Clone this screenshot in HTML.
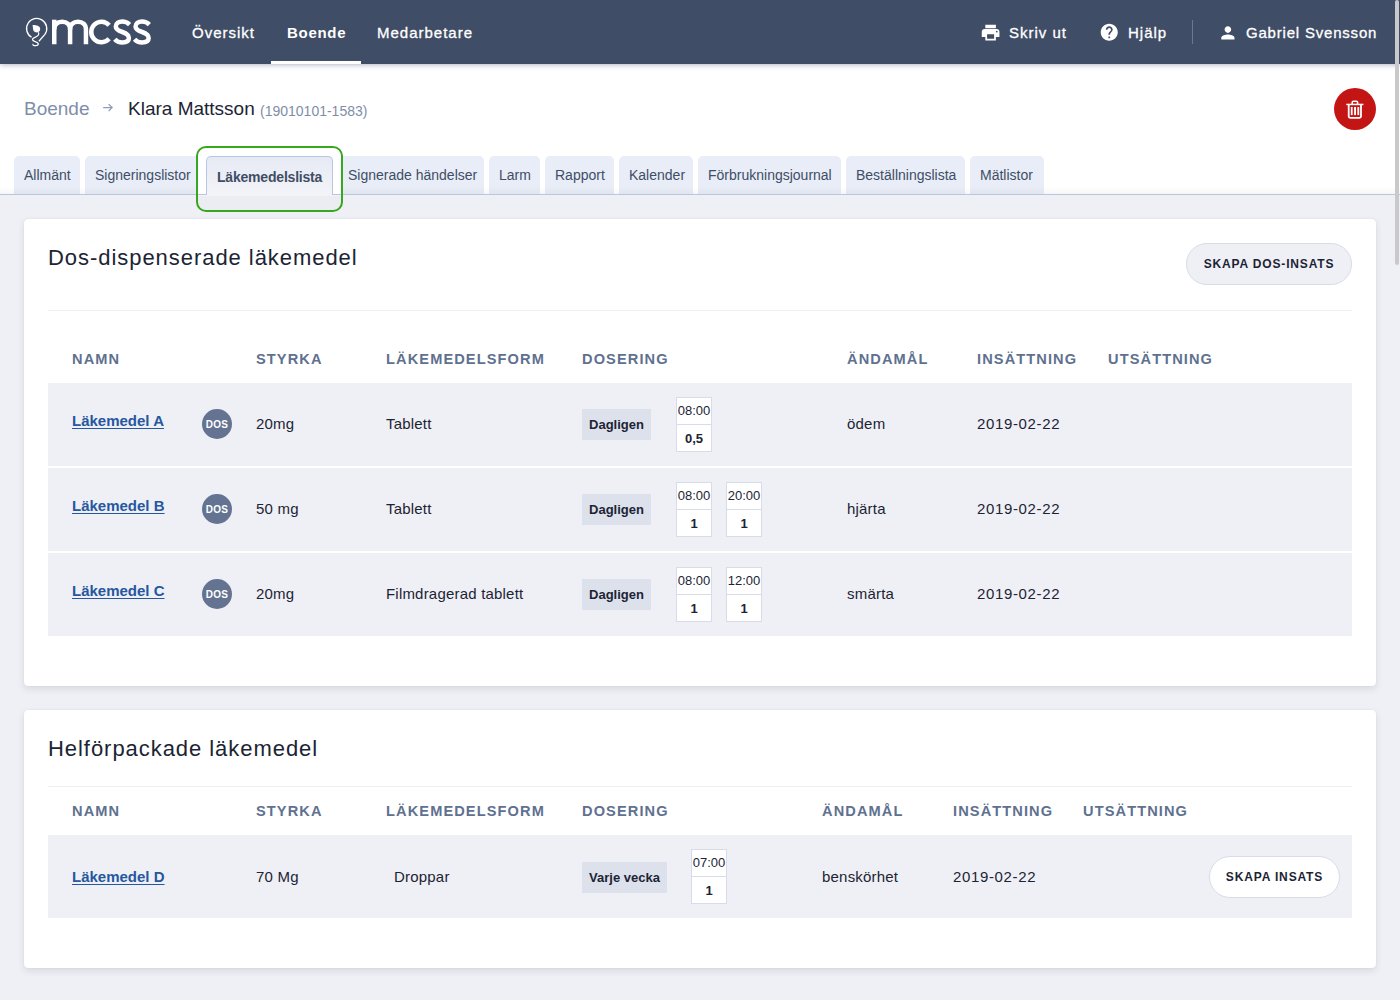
<!DOCTYPE html>
<html lang="sv">
<head>
<meta charset="utf-8">
<title>mcss</title>
<style>
*{box-sizing:border-box;margin:0;padding:0}
html,body{width:1400px;height:1000px;overflow:hidden}
body{position:relative;background:#eff0f5;font-family:"Liberation Sans",sans-serif;color:#1c2434}
.abs{position:absolute}
.hdr{left:0;top:0;width:1400px;height:64px;background:#404d66;box-shadow:0 1px 5px rgba(50,70,120,.38);z-index:5}
.nav{color:#fff;font-size:15px;letter-spacing:1px;-webkit-text-stroke:0.3px #fff;top:24px;white-space:nowrap;line-height:18px}
.top{left:0;top:64px;width:1400px;height:131px;background:linear-gradient(#fff 0,#fff 123px,#f6f6f4 130px);border-bottom:1px solid #bac5e1}
.crumb{font-size:19px;line-height:22px;white-space:nowrap}
.tab{top:156px;height:38px;background:linear-gradient(#e9edf7 0,#e9edf7 30px,#e1e5ee 38px);border-radius:5px 5px 0 0;color:#404d66;font-size:14px;line-height:38px;padding-left:10px;white-space:nowrap}
.card{background:#fff;border-radius:4px;box-shadow:0 0 1px rgba(40,50,80,.18),0 3px 7px rgba(40,55,95,.12)}
.h2{font-size:22px;letter-spacing:0.95px;line-height:26px;white-space:nowrap;color:#1c2434}
.th{font-size:14.6px;font-weight:bold;letter-spacing:1.1px;color:#5f7190;white-space:nowrap;line-height:16px}
.row{left:48px;width:1304px;height:83px;background:#eff0f5}
.td{font-size:15px;letter-spacing:0.2px;line-height:18px;white-space:nowrap;color:#1c2434}
.lnk{font-size:15px;font-weight:bold;color:#2657a0;text-decoration:underline;text-decoration-thickness:1.3px;text-underline-offset:2px;white-space:nowrap;line-height:18px}
.dos{width:30px;height:30px;border-radius:50%;background:#637391;color:#fff;font-size:10px;letter-spacing:0.3px;font-weight:bold;text-align:center;line-height:32px}
.pill{height:31px;background:#dde1ec;font-size:13px;font-weight:bold;line-height:32px;text-align:center;white-space:nowrap}
.tbox{width:36px;height:55px;background:#fff;border:1px solid #d6dce9}
.tbox .t{height:27px;border-bottom:1px solid #d6dce9;font-size:13px;line-height:25px;text-align:center}
.tbox .v{height:27px;font-size:13px;font-weight:bold;line-height:27px;text-align:center}
.btn{border-radius:22px;border:1px solid #d6dce9;font-size:12px;font-weight:bold;letter-spacing:0.85px;text-align:center;white-space:nowrap;color:#1c2434}
</style>
</head>
<body>
<!-- header -->
<div class="abs hdr">
  <svg class="abs" style="left:0;top:0" width="160" height="64" viewBox="0 0 160 64">
    <g fill="none" stroke="#fff" stroke-linecap="butt">
      <path d="M54.25 44.25V19.7" stroke-width="4.5"/>
      <path d="M54.25 29.5C54.25 24 57.6 21.75 62.2 21.75C66.8 21.75 70.1 24.5 70.1 29.5V44.25" stroke-width="4.5"/>
      <path d="M70.1 29.5C70.1 24.5 73.5 21.75 78 21.75C82.5 21.75 85.95 24.5 85.95 29.5V44.25" stroke-width="4.5"/>
      <path d="M109.1 25.14A10.25 10.25 0 1 0 109.1 38.86" stroke-width="4.5"/>
      <path id="s1" d="M129.6 24.6C127.6 22.6 125.2 21.5 122.3 21.5C118.6 21.5 115.8 23.4 115.8 26.5C115.8 29.6 118.7 30.8 122.4 32C126.2 33.3 128.9 34.8 128.9 38.1C128.9 41.2 126 42.5 122.3 42.5C119.2 42.5 116.6 41.3 114.8 39.2" stroke-width="4.5"/>
      <path d="M149.35 24.6C147.35 22.6 144.95 21.5 142.05 21.5C138.35 21.5 135.55 23.4 135.55 26.5C135.55 29.6 138.45 30.8 142.15 32C145.95 33.3 148.65 34.8 148.65 38.1C148.65 41.2 145.75 42.5 142.05 42.5C138.95 42.5 136.35 41.3 134.55 39.2" stroke-width="4.5"/>
      <path d="M31.6 37.3A10.1 10.1 0 1 1 44.9 34.4L38.9 41.2" stroke-width="1.3"/>
      <path d="M38.4 32.2C39.8 34.6 37.6 36.4 34.4 37.6C31.4 38.8 32 40.8 35.2 41.6C38.4 42.4 39.6 44.6 36.6 45.5C34.2 46.1 32.2 45.2 33.2 44" stroke-width="1.2"/>
    </g>
    <path d="M32.6 24.9C36 24.8 40.2 25.6 40.2 29C40.2 31.1 38.6 32.4 36.6 32.4C34.2 32.4 33 30.6 33 28.5Z" fill="#fff"/>
  </svg>
  <svg class="abs" style="left:979.6px;top:22px" width="21.2" height="21.2" viewBox="0 0 24 24"><path fill="#fff" d="M19 8H5c-1.66 0-3 1.34-3 3v6h4v4h12v-4h4v-6c0-1.66-1.34-3-3-3zm-3 11H8v-5h8v5zm3-7c-.55 0-1-.45-1-1s.45-1 1-1 1 .45 1 1-.45 1-1 1zm-1-9H6v4h12V3z"/></svg>
  <svg class="abs" style="left:1099.2px;top:21.9px" width="20.5" height="20.5" viewBox="0 0 24 24"><path fill="#fff" d="M12 2C6.48 2 2 6.48 2 12s4.48 10 10 10 10-4.48 10-10S17.52 2 12 2zm1 17h-2v-2h2v2zm2.07-7.75l-.9.92C13.45 12.9 13 13.5 13 15h-2v-.5c0-1.1.45-2.1 1.17-2.83l1.240-1.26c.37-.36.59-.86.59-1.41 0-1.1-.9-2-2-2s-2 .9-2 2H8c0-2.21 1.79-4 4-4s4 1.79 4 4c0 .88-.36 1.68-.93 2.250z"/></svg>
  <svg class="abs" style="left:1217.5px;top:22.5px" width="19.8" height="19.8" viewBox="0 0 24 24"><path fill="#fff" d="M12 12c2.21 0 4-1.79 4-4s-1.79-4-4-4-4 1.79-4 4 1.79 4 4 4zm0 2c-2.67 0-8 1.34-8 4v2h16v-2c0-2.66-5.33-4-8-4z"/></svg>
  <div class="abs nav" style="left:192px">Översikt</div>
  <div class="abs nav" style="left:287px;font-weight:bold;letter-spacing:0.7px;-webkit-text-stroke:0">Boende</div>
  <div class="abs" style="left:271px;top:61px;width:90px;height:3px;background:#fff"></div>
  <div class="abs nav" style="left:377px">Medarbetare</div>
  <div class="abs nav" style="left:1009px">Skriv ut</div>
  <div class="abs nav" style="left:1128px">Hjälp</div>
  <div class="abs" style="left:1192px;top:20px;width:1px;height:24px;background:#6b7890"></div>
  <div class="abs nav" style="left:1246px;letter-spacing:0.8px">Gabriel Svensson</div>
</div>

<!-- top white area -->
<div class="abs top"></div>
<div class="abs crumb" style="left:24px;top:98px;color:#7f8ea8">Boende</div>
<svg class="abs" style="left:102px;top:102px" width="12" height="11" viewBox="0 0 12 11"><path d="M1.2 5.6H10M6.6 2.1L10.1 5.6L6.6 9.1" fill="none" stroke="#8f9cb3" stroke-width="1.3"/></svg>
<div class="abs crumb" style="left:128px;top:98px;color:#1c2434">Klara Mattsson</div>
<div class="abs crumb" style="left:260px;top:100px;color:#7f8ea8;font-size:14px">(19010101-1583)</div>
<div class="abs" style="left:1334px;top:88px;width:42px;height:42px;border-radius:50%;background:#c41515"></div>
<svg class="abs" style="left:1334px;top:88px" width="42" height="42" viewBox="1334 88 42 42">
  <g fill="none" stroke="#fff">
    <path d="M1346.3 104.45H1363.4" stroke-width="1.5"/>
    <path d="M1352.2 104.4V102.6Q1352.2 101.3 1353.5 101.3H1356.3Q1357.6 101.3 1357.6 102.6V104.4" stroke-width="1.6"/>
    <path d="M1348.7 105V116.3Q1348.7 117.8 1350.2 117.8H1359.5Q1361 117.8 1361 116.3V105" stroke-width="1.8"/>
  </g>
  <g fill="#fff"><rect x="1350.8" y="107" width="1.8" height="8.1"/><rect x="1354.1" y="107" width="1.9" height="8.1"/><rect x="1357.4" y="107" width="1.8" height="8.1"/></g>
</svg>

<!-- tabs -->
<div class="abs tab" style="left:14px;width:66px">Allmänt</div>
<div class="abs tab" style="left:85px;width:116px">Signeringslistor</div>
<div class="abs tab" style="left:338px;width:146px">Signerade händelser</div>
<div class="abs" style="left:196px;top:146px;width:147px;height:66px;border:2px solid #37a71f;border-radius:10px;background:linear-gradient(#fff 0,#fff 46px,#bac5e1 46px,#bac5e1 47px,#f2f3f7 47px,#f2f3f7 48px,#ecedf2 48px);z-index:2"></div>
<div class="abs" style="left:206px;top:156px;width:127px;height:39px;border:1px solid #bac5e1;border-bottom:none;border-radius:5px 5px 0 0;background:linear-gradient(#e6eaf4,#f3f4f8);color:#404d66;font-size:14px;font-weight:bold;letter-spacing:-0.2px;line-height:40px;padding-left:10px;white-space:nowrap;z-index:3">Läkemedelslista</div>
<div class="abs tab" style="left:489px;width:51px">Larm</div>
<div class="abs tab" style="left:545px;width:69px">Rapport</div>
<div class="abs tab" style="left:619px;width:74px">Kalender</div>
<div class="abs tab" style="left:698px;width:143px">Förbrukningsjournal</div>
<div class="abs tab" style="left:846px;width:119px">Beställningslista</div>
<div class="abs tab" style="left:970px;width:74px">Mätlistor</div>

<!-- card 1 -->
<div class="abs card" style="left:24px;top:219px;width:1352px;height:467px"></div>
<div class="abs h2" style="left:48px;top:245px">Dos-dispenserade läkemedel</div>
<div class="abs btn" style="left:1186px;top:243px;width:166px;height:42px;line-height:40px;background:#eff0f5">SKAPA DOS-INSATS</div>
<div class="abs" style="left:48px;top:310px;width:1304px;height:1px;background:#eceef3"></div>

<div class="abs th" style="left:72px;top:351px">NAMN</div>
<div class="abs th" style="left:256px;top:351px">STYRKA</div>
<div class="abs th" style="left:386px;top:351px">LÄKEMEDELSFORM</div>
<div class="abs th" style="left:582px;top:351px">DOSERING</div>
<div class="abs th" style="left:847px;top:351px">ÄNDAMÅL</div>
<div class="abs th" style="left:977px;top:351px">INSÄTTNING</div>
<div class="abs th" style="left:1108px;top:351px">UTSÄTTNING</div>

<div class="abs row" style="top:383px"></div>
<div class="abs row" style="top:468px"></div>
<div class="abs row" style="top:553px"></div>
<div class="abs lnk" style="left:72px;top:412px">Läkemedel A</div>
<div class="abs dos" style="left:202px;top:409px">DOS</div>
<div class="abs td" style="left:256px;top:415px">20mg</div>
<div class="abs td" style="left:386px;top:415px">Tablett</div>
<div class="abs pill" style="left:582px;top:409px;width:69px">Dagligen</div>
<div class="abs tbox" style="left:676px;top:397px"><div class="t">08:00</div><div class="v">0,5</div></div>
<div class="abs td" style="left:847px;top:415px">ödem</div>
<div class="abs td" style="left:977px;top:415px;letter-spacing:0.65px">2019-02-22</div>
<div class="abs lnk" style="left:72px;top:497px">Läkemedel B</div>
<div class="abs dos" style="left:202px;top:494px">DOS</div>
<div class="abs td" style="left:256px;top:500px">50 mg</div>
<div class="abs td" style="left:386px;top:500px">Tablett</div>
<div class="abs pill" style="left:582px;top:494px;width:69px">Dagligen</div>
<div class="abs tbox" style="left:676px;top:482px"><div class="t">08:00</div><div class="v">1</div></div>
<div class="abs tbox" style="left:726px;top:482px"><div class="t">20:00</div><div class="v">1</div></div>
<div class="abs td" style="left:847px;top:500px">hjärta</div>
<div class="abs td" style="left:977px;top:500px;letter-spacing:0.65px">2019-02-22</div>
<div class="abs lnk" style="left:72px;top:582px">Läkemedel C</div>
<div class="abs dos" style="left:202px;top:579px">DOS</div>
<div class="abs td" style="left:256px;top:585px">20mg</div>
<div class="abs td" style="left:386px;top:585px">Filmdragerad tablett</div>
<div class="abs pill" style="left:582px;top:579px;width:69px">Dagligen</div>
<div class="abs tbox" style="left:676px;top:567px"><div class="t">08:00</div><div class="v">1</div></div>
<div class="abs tbox" style="left:726px;top:567px"><div class="t">12:00</div><div class="v">1</div></div>
<div class="abs td" style="left:847px;top:585px">smärta</div>
<div class="abs td" style="left:977px;top:585px;letter-spacing:0.65px">2019-02-22</div>

<!-- card 2 -->
<div class="abs card" style="left:24px;top:710px;width:1352px;height:258px"></div>
<div class="abs h2" style="left:48px;top:736px">Helförpackade läkemedel</div>
<div class="abs" style="left:48px;top:786px;width:1304px;height:1px;background:#eceef3"></div>
<div class="abs th" style="left:72px;top:803px">NAMN</div>
<div class="abs th" style="left:256px;top:803px">STYRKA</div>
<div class="abs th" style="left:386px;top:803px">LÄKEMEDELSFORM</div>
<div class="abs th" style="left:582px;top:803px">DOSERING</div>
<div class="abs th" style="left:822px;top:803px">ÄNDAMÅL</div>
<div class="abs th" style="left:953px;top:803px">INSÄTTNING</div>
<div class="abs th" style="left:1083px;top:803px">UTSÄTTNING</div>
<div class="abs row" style="top:835px"></div>
<div class="abs lnk" style="left:72px;top:868px">Läkemedel D</div>
<div class="abs td" style="left:256px;top:868px">70 Mg</div>
<div class="abs td" style="left:394px;top:868px">Droppar</div>
<div class="abs pill" style="left:582px;top:862px;width:85px">Varje vecka</div>
<div class="abs tbox" style="left:691px;top:849px"><div class="t">07:00</div><div class="v">1</div></div>
<div class="abs td" style="left:822px;top:868px">benskörhet</div>
<div class="abs td" style="left:953px;top:868px;letter-spacing:0.65px">2019-02-22</div>
<div class="abs btn" style="left:1209px;top:856px;width:131px;height:42px;line-height:41px;background:#fff">SKAPA INSATS</div>

<!-- scrollbar -->
<div class="abs" style="left:1395px;top:0;width:4px;height:265px;border-radius:2px;background:#c9c9c9;z-index:10"></div>
</body>
</html>
